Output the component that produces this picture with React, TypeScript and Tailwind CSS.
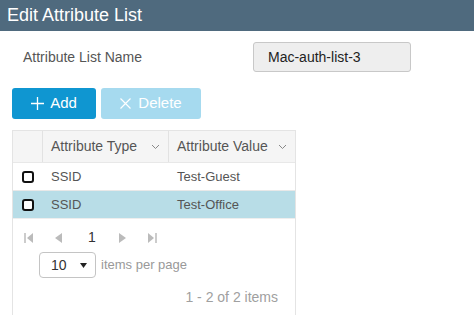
import * as React from "react";

const rows = [
  { type: "SSID", value: "Test-Guest", selected: false },
  { type: "SSID", value: "Test-Office", selected: true },
];

function Caret() {
  return (
    <svg width="9" height="6" viewBox="0 0 9 6" className="text-[#888]">
      <path d="M1 1l3.5 3.5L8 1" fill="none" stroke="currentColor" strokeWidth="1" />
    </svg>
  );
}

function Check() {
  return <span className="block h-[12px] w-[12px] rounded-[3px] border-2 border-[#111] bg-white" />;
}

export default function App() {
  return (
    <div
      className="relative h-[315px] w-[474px] overflow-hidden bg-white"
      style={{ fontFamily: '"Liberation Sans", Arial, sans-serif' }}
    >
      {/* Header */}
      <div className="flex h-[31px] items-center bg-[#4f6a7e] pl-[7px] text-[18px] text-white">
        Edit Attribute List
      </div>

      {/* Name field */}
      <div className="mt-[11px] flex items-center">
        <div className="w-[253px] pl-[23px] text-[14px] text-[#555]">Attribute List Name</div>
        <div className="flex h-[30px] w-[158px] items-center rounded-[3px] border border-[#c8c8c8] bg-[#eeeeee] pl-[14px] text-[14px] text-[#222]">
          Mac-auth-list-3
        </div>
      </div>

      {/* Buttons */}
      <div className="mt-[16px] flex gap-[5px] pl-[12px]">
        <button className="flex h-[31px] w-[84px] items-center justify-center gap-[6px] rounded-[3px] bg-[#0f96d1] text-[15px] text-white">
          <svg width="13" height="13" viewBox="0 0 13 13">
            <path d="M6.5 0v13M0 6.5h13" stroke="currentColor" strokeWidth="1.3" />
          </svg>
          Add
        </button>
        <button className="flex h-[31px] w-[100px] items-center justify-center gap-[7px] rounded-[3px] bg-[#a6daef] text-[15px] text-white">
          <svg width="11" height="11" viewBox="0 0 11 11">
            <path d="M0.5 0.5l10 10M10.5 0.5l-10 10" stroke="currentColor" strokeWidth="1.2" />
          </svg>
          Delete
        </button>
      </div>

      {/* Grid */}
      <div className="ml-[12px] mt-[11px] h-[200px] w-[284px] border border-[#e4e4e4] border-b-0">
        <div className="flex h-[31px] bg-[#f5f5f5] text-[14px] text-[#555]">
          <div className="w-[30px] border-r border-[#e2e2e2]" />
          <div className="flex w-[126px] items-center justify-between border-r border-[#e2e2e2] pl-[8px] pr-[8px]">
            <span>Attribute Type</span>
            <Caret />
          </div>
          <div className="flex flex-1 items-center justify-between pl-[8px] pr-[8px]">
            <span>Attribute Value</span>
            <Caret />
          </div>
        </div>
        {rows.map((r, i) => (
          <div
            key={i}
            className={
              "flex h-[28px] items-center border-t border-[#e8e8e8] text-[13px] text-[#555] " +
              (r.selected ? "bg-[#b8dde7]" : "bg-white")
            }
          >
            <div className="flex w-[30px] justify-center">
              <Check />
            </div>
            <div className="w-[126px] pl-[8px]">{r.type}</div>
            <div className="flex-1 pl-[8px]">{r.value}</div>
          </div>
        ))}

        {/* Pager */}
        <div className="flex h-[38px] items-center border-t border-[#eeeeee] pl-[11px] text-[#bbb]">
          <svg width="10" height="10" viewBox="0 0 10 10">
            <path d="M1 0v10" stroke="currentColor" strokeWidth="1.5" />
            <path d="M9 0v10L3 5z" fill="currentColor" />
          </svg>
          <svg className="ml-[21px]" width="7" height="10" viewBox="0 0 7 10">
            <path d="M7 0v10L0 5z" fill="currentColor" />
          </svg>
          <span className="ml-[26px] text-[14px] text-[#333]">1</span>
          <svg className="ml-[23px]" width="7" height="10" viewBox="0 0 7 10">
            <path d="M0 0v10L7 5z" fill="currentColor" />
          </svg>
          <svg className="ml-[21px]" width="10" height="10" viewBox="0 0 10 10">
            <path d="M1 0v10L7 5z" fill="currentColor" />
            <path d="M9 0v10" stroke="currentColor" strokeWidth="1.5" />
          </svg>
        </div>

        <div className="mt-[-4px] flex items-center pl-[26px]">
          <div className="flex h-[26px] w-[57px] items-center justify-between rounded-[4px] border border-[#c4c4c4] pl-[11px] pr-[8px] text-[14px] text-[#333]">
            <span>10</span>
            <svg width="7" height="5" viewBox="0 0 7 5">
              <path d="M0 0h7L3.5 5z" fill="#222" />
            </svg>
          </div>
          <span className="ml-[5px] text-[13px] text-[#999]">items per page</span>
        </div>

        <div className="mt-[9px] pr-[17px] text-right text-[14px] text-[#a0a0a0]">1 - 2 of 2 items</div>
      </div>
    </div>
  );
}
